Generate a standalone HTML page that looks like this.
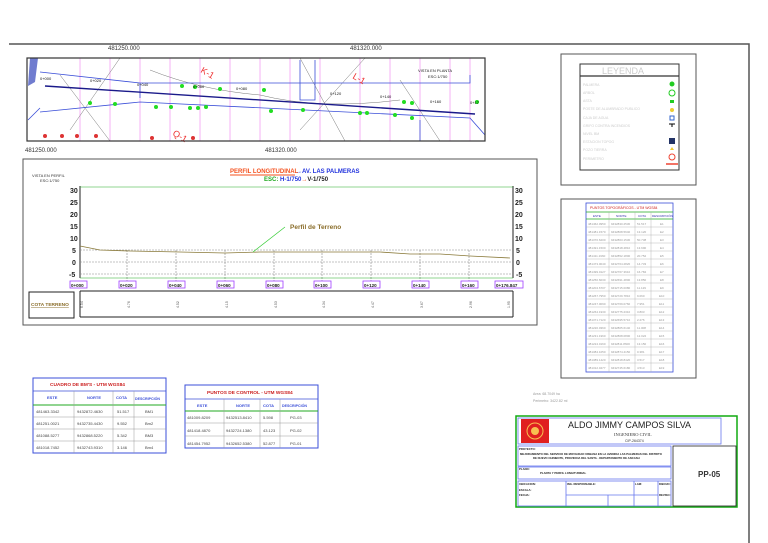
<!DOCTYPE html><html><head><style>body{margin:0;background:#fff}svg{display:block}text{font-family:"Liberation Sans",sans-serif}</style></head><body>
<svg width="768" height="543" viewBox="0 0 768 543" xmlns="http://www.w3.org/2000/svg">
<rect width="768" height="543" fill="#fff"/>
<path d="M9 44H749V543" fill="none" stroke="#555" stroke-width="1.5"/>
<text x="108" y="50" font-size="6" fill="#333">481250.000</text>
<text x="350" y="50" font-size="6" fill="#333">481320.000</text>
<g>
<rect x="27" y="58" width="458" height="83" fill="#fff"/>
<g stroke="#ee66ee" stroke-width="0.5">
<path d="M80 58V141M110 58V141M140 58V141M170 58V141M200 58V141M230 58V141M260 58V141M290 58V141M320 58V141M360 58V141M390 58V141M420 58V141M450 58V141M470 58V141"/></g>
<g stroke="#777" stroke-width="0.5" fill="none">
<path d="M60 75L110 141M120 58L70 130M300 58L345 141M365 58L300 130M400 80L440 141M150 70Q200 90 260 95Q320 110 400 100"/></g>
<g stroke="#3b4fd8" stroke-width="0.8" fill="none">
<path d="M40 72L140 83H470V75M40 112L140 102L470 118L485 135M140 83L140 98M300 60V100H315V60M420 120V141M28 120L40 108"/></g>
<path d="M45 86L475 114" stroke="#1a1a8a" stroke-width="1.4"/>
<path d="M30 58L38 58L35 82L28 86Z" fill="#3344bb" opacity="0.7"/>
<g fill="#22dd22">
<circle cx="182" cy="86" r="2"/><circle cx="195" cy="87" r="2"/><circle cx="220" cy="89" r="2"/><circle cx="264" cy="90" r="2"/><circle cx="90" cy="103" r="2"/><circle cx="115" cy="104" r="2"/><circle cx="156" cy="107" r="2"/><circle cx="171" cy="107" r="2"/><circle cx="190" cy="108" r="2"/><circle cx="198" cy="108" r="2"/><circle cx="206" cy="107" r="2"/><circle cx="271" cy="111" r="2"/><circle cx="303" cy="110" r="2"/><circle cx="360" cy="113" r="2"/><circle cx="367" cy="113" r="2"/><circle cx="395" cy="115" r="2"/><circle cx="404" cy="102" r="2"/><circle cx="412" cy="103" r="2"/><circle cx="477" cy="102" r="2"/><circle cx="412" cy="118" r="2"/>
</g>
<g fill="#d33"><circle cx="45" cy="136" r="2"/><circle cx="62" cy="136" r="2"/><circle cx="77" cy="136" r="2"/><circle cx="96" cy="136" r="2"/><circle cx="152" cy="138" r="2"/><circle cx="193" cy="138" r="2"/></g>
<text x="200" y="72" font-size="9" fill="#e33" transform="rotate(30 200 72)">K-1</text>
<text x="352" y="78" font-size="9" fill="#e33" transform="rotate(30 352 78)">L-1</text>
<text x="172" y="135" font-size="9" fill="#e33" transform="rotate(30 172 135)">Q-1</text>
<g font-size="4" fill="#111"><text x="40" y="80">0+000</text><text x="90" y="82">0+020</text><text x="137" y="86">0+040</text><text x="193" y="88">0+060</text><text x="236" y="90">0+080</text><text x="330" y="95">0+120</text><text x="380" y="98">0+140</text><text x="430" y="103">0+160</text><text x="470" y="104">0+17</text></g>
<text x="418" y="72" font-size="4" fill="#222">VISTA EN PLANTA</text><text x="428" y="78" font-size="4" fill="#222">ESC:1/750</text>
<rect x="27" y="58" width="458" height="83" fill="none" stroke="#333" stroke-width="1.2"/>
</g>
<text x="25" y="152" font-size="6" fill="#333">481250.000</text>
<text x="265" y="152" font-size="6" fill="#333">481320.000</text>
<rect x="23" y="159" width="514" height="166" fill="#fff" stroke="#555" stroke-width="1"/>
<text x="230" y="173" font-size="6" font-weight="bold" fill="#f4511e">PERFIL LONGITUDINAL</text>
<line x1="230" y1="175" x2="295" y2="175" stroke="#f4511e" stroke-width="1"/>
<text x="296" y="173" font-size="6" font-weight="bold" fill="#2233dd">→AV. LAS PALMERAS</text>
<text x="264" y="181" font-size="6" font-weight="bold" fill="#2a2">ESC: <tspan fill="#2233dd">H-1/750</tspan><tspan fill="#f4511e">→</tspan><tspan fill="#222">V-1/750</tspan></text>
<text x="32" y="177" font-size="4" fill="#333">VISTA EN PERFIL</text><text x="40" y="182" font-size="4" fill="#333">ESC:1/750</text>
<g stroke="#222" stroke-width="1"><line x1="80" y1="186" x2="80" y2="278"/><line x1="513" y1="186" x2="513" y2="278"/></g>
<g stroke="#888" stroke-width="0.6" stroke-dasharray="2,1"><line x1="80" y1="250" x2="513" y2="250"/><line x1="80" y1="262" x2="513" y2="262"/><line x1="80" y1="274" x2="513" y2="274"/>
<path d="M127 250V284M176 250V284M225 250V284M274 250V284M322 250V284M371 250V284M420 250V284M469 250V284"/></g>
<g stroke="#2a2" stroke-width="0.6"><path d="M80 187H513M80 278H513"/></g>
<g font-size="7" font-weight="bold" fill="#222">
<text x="70" y="193">30</text><text x="70" y="205">25</text><text x="70" y="217">20</text><text x="70" y="229">15</text><text x="70" y="241">10</text><text x="72" y="253">5</text><text x="72" y="265">0</text><text x="69" y="277">-5</text>
<text x="515" y="193">30</text><text x="515" y="205">25</text><text x="515" y="217">20</text><text x="515" y="229">15</text><text x="515" y="241">10</text><text x="516" y="253">5</text><text x="516" y="265">0</text><text x="516" y="277">-5</text></g>
<path d="M80 246L100 250L130 251L180 252L225 253L260 252L300 252L340 252L380 252L410 254L440 254L470 256L510 258" fill="none" stroke="#8a7a3a" stroke-width="0.8"/>
<line x1="253" y1="252" x2="285" y2="227" stroke="#3c3" stroke-width="0.7"/>
<text x="290" y="229" font-size="6.5" font-weight="bold" fill="#8a6d2a">Perfil de Terreno</text>
<g stroke="#a040ff" stroke-width="0.8" fill="#fff">
<rect x="70" y="281" width="17" height="7"/><rect x="119" y="281" width="17" height="7"/><rect x="168" y="281" width="17" height="7"/><rect x="217" y="281" width="17" height="7"/><rect x="266" y="281" width="17" height="7"/><rect x="314" y="281" width="17" height="7"/><rect x="363" y="281" width="17" height="7"/><rect x="412" y="281" width="17" height="7"/><rect x="461" y="281" width="17" height="7"/><rect x="495" y="281" width="28" height="7"/></g>
<g font-size="4.5" font-weight="bold" fill="#222">
<text x="71" y="287">0+000</text><text x="120" y="287">0+020</text><text x="169" y="287">0+040</text><text x="218" y="287">0+060</text><text x="267" y="287">0+080</text><text x="315" y="287">0+100</text><text x="364" y="287">0+120</text><text x="413" y="287">0+140</text><text x="462" y="287">0+160</text><text x="496" y="287">0+176.847</text></g>
<rect x="29" y="292" width="45" height="26" fill="#fff" stroke="#222" stroke-width="1"/>
<text x="31" y="306" font-size="4.8" font-weight="bold" fill="#8a6d2a" text-decoration="underline">COTA TERRENO</text>
<path d="M80 291H513M80 317H513M80 291V317M513 291V317" stroke="#222" stroke-width="1" fill="none"/>
<g font-size="3.5" fill="#555">
<text transform="translate(83 308) rotate(-90)">6.54</text><text transform="translate(130 308) rotate(-90)">4.76</text><text transform="translate(179 308) rotate(-90)">4.52</text><text transform="translate(228 308) rotate(-90)">4.15</text><text transform="translate(277 308) rotate(-90)">4.53</text><text transform="translate(325 308) rotate(-90)">4.34</text><text transform="translate(374 308) rotate(-90)">4.47</text><text transform="translate(423 308) rotate(-90)">3.67</text><text transform="translate(472 308) rotate(-90)">2.96</text><text transform="translate(510 308) rotate(-90)">1.95</text></g>
<rect x="561" y="54" width="135" height="131" fill="#fff" stroke="#555" stroke-width="1"/>
<rect x="580" y="64" width="99" height="106" fill="#fff" stroke="#333" stroke-width="1"/>
<line x1="580" y1="76" x2="679" y2="76" stroke="#333" stroke-width="1.2"/>
<text x="602" y="74" font-size="9" fill="#ccc">LEYENDA</text>
<g font-size="3.5" fill="#ccc"><text x="583" y="86">PALMERA</text><text x="583" y="94">ARBOL</text><text x="583" y="102">ASTA</text><text x="583" y="110">POSTE DE ALUMBRADO PUBLICO</text><text x="583" y="119">CAJA DE AGUA</text><text x="583" y="127">GRIFO CONTRA INCENDIOS</text><text x="583" y="135">NIVEL BM</text><text x="583" y="143">ESTACION TOPOG</text><text x="583" y="151">POZO TIERRA</text><text x="583" y="160">PERIMETRO</text></g>
<g><circle cx="672" cy="84" r="2.5" fill="#2c2"/><circle cx="672" cy="93" r="3" fill="none" stroke="#2c2"/><rect x="670" y="100" width="4" height="3" fill="#2c2"/><circle cx="672" cy="110" r="2" fill="#ec3"/><rect x="670" y="116" width="4" height="4" fill="none" stroke="#36c"/><path d="M669 124H675M672 124V127" stroke="#000"/><rect x="669" y="138" width="6" height="6" fill="#236"/><path d="M670 150L672 147L674 150Z" fill="#ec3"/><circle cx="672" cy="157" r="3" fill="none" stroke="#e43"/><path d="M666 164H678" stroke="#e43" stroke-width="1.5"/></g>
<rect x="561" y="199" width="135" height="179" fill="#fff" stroke="#555" stroke-width="1"/>
<rect x="586" y="203" width="87" height="169" fill="#fff" stroke="#3b4fd8" stroke-width="0.8"/>
<text x="590" y="209" font-size="3.5" fill="#c22">PUNTOS TOPOGRÁFICOS - UTM WGS84</text>
<line x1="586" y1="212" x2="673" y2="212" stroke="#2a2" stroke-width="0.8"/>
<line x1="586" y1="219" x2="673" y2="219" stroke="#2a2" stroke-width="0.8"/>
<g stroke="#aaa" stroke-width="0.4"><path d="M609 212V372M635 212V372M651 212V372"/>
<path d="M586 227H673M586 235H673M586 243H673M586 251H673M586 259H673M586 267H673M586 275H673M586 283H673M586 291H673M586 299H673M586 307H673M586 315H673M586 323H673M586 331H673M586 339H673M586 347H673M586 355H673M586 363H673"/></g>
<g font-size="3" fill="#33a"><text x="593" y="217">ESTE</text><text x="616" y="217">NORTE</text><text x="638" y="217">COTA</text><text x="652" y="217">DESCRIPCIÓN</text></g>
<g font-size="3" fill="#999">
<text x="588" y="225">481462.0950</text><text x="611" y="225">9432830.2530</text><text x="637" y="225">51.517</text><text x="660" y="225">E1</text>
<text x="588" y="233">481481.1570</text><text x="611" y="233">9432808.5640</text><text x="637" y="233">13.120</text><text x="660" y="233">E2</text>
<text x="588" y="241">481370.6200</text><text x="611" y="241">9432863.1530</text><text x="637" y="241">50.738</text><text x="660" y="241">E3</text>
<text x="588" y="249">481491.1500</text><text x="611" y="249">9432818.4810</text><text x="637" y="249">13.690</text><text x="660" y="249">E4</text>
<text x="588" y="257">481411.1960</text><text x="611" y="257">9432852.1800</text><text x="637" y="257">20.752</text><text x="660" y="257">E5</text>
<text x="588" y="265">481473.0040</text><text x="611" y="265">9432764.2820</text><text x="637" y="265">14.733</text><text x="660" y="265">E6</text>
<text x="588" y="273">481499.0127</text><text x="611" y="273">9432767.3610</text><text x="637" y="273">16.784</text><text x="660" y="273">E7</text>
<text x="588" y="281">481250.6030</text><text x="611" y="281">9432691.4800</text><text x="637" y="281">13.850</text><text x="660" y="281">E8</text>
<text x="588" y="289">481204.6707</text><text x="611" y="289">9432715.0080</text><text x="637" y="289">11.129</text><text x="660" y="289">E9</text>
<text x="588" y="297">481267.7950</text><text x="611" y="297">9432729.7810</text><text x="637" y="297">9.060</text><text x="659" y="297">E10</text>
<text x="588" y="305">481247.0090</text><text x="611" y="305">9432769.0760</text><text x="637" y="305">7.951</text><text x="659" y="305">E11</text>
<text x="588" y="313">481264.1930</text><text x="611" y="313">9432775.2310</text><text x="637" y="313">3.803</text><text x="659" y="313">E12</text>
<text x="588" y="321">481371.7120</text><text x="611" y="321">9432695.5710</text><text x="637" y="321">2.276</text><text x="659" y="321">E13</text>
<text x="588" y="329">481220.0360</text><text x="611" y="329">9432805.6140</text><text x="637" y="329">11.008</text><text x="659" y="329">E14</text>
<text x="588" y="337">481231.1960</text><text x="611" y="337">9432808.0800</text><text x="637" y="337">12.022</text><text x="659" y="337">E15</text>
<text x="588" y="345">481224.0160</text><text x="611" y="345">9432811.8600</text><text x="637" y="345">13.150</text><text x="659" y="345">E16</text>
<text x="588" y="353">481384.1050</text><text x="611" y="353">9432874.4150</text><text x="637" y="353">0.381</text><text x="659" y="353">E17</text>
<text x="588" y="361">481389.1420</text><text x="611" y="361">9432818.8420</text><text x="637" y="361">3.517</text><text x="659" y="361">E18</text>
<text x="588" y="369">481312.0477</text><text x="611" y="369">9432745.6180</text><text x="637" y="369">4.513</text><text x="659" y="369">E19</text>
</g>
<g>
<rect x="33" y="378" width="133" height="75" fill="#fff" stroke="#3b4fd8" stroke-width="1"/>
<text x="50" y="386" font-size="4.8" font-weight="bold" fill="#c22">CUADRO DE BM'S - UTM WGS84</text>
<line x1="33" y1="391" x2="166" y2="391" stroke="#3b4fd8" stroke-width="0.8"/>
<line x1="33" y1="405" x2="166" y2="405" stroke="#2a2" stroke-width="1"/>
<g stroke="#999" stroke-width="0.5"><path d="M74 391V453M113 391V453M134 391V453M33 417H166M33 429H166M33 441H166"/></g>
<g font-size="4" font-weight="bold" fill="#3b4fd8"><text x="47" y="399">ESTE</text><text x="87" y="399">NORTE</text><text x="116" y="399">COTA</text><text x="135" y="400" font-size="3.6">DESCRIPCIÓN</text></g>
<g font-size="4" fill="#444"><text x="36" y="413">481463.3342</text><text x="77" y="413">9432872.4630</text><text x="117" y="413">51.517</text><text x="145" y="413">BM1</text>
<text x="36" y="425">481251.0021</text><text x="77" y="425">9432735.4430</text><text x="117" y="425">9.552</text><text x="145" y="425">Bm2</text>
<text x="36" y="437">481088.5277</text><text x="77" y="437">9432868.5220</text><text x="117" y="437">5.342</text><text x="145" y="437">BM3</text>
<text x="36" y="449">481018.7452</text><text x="77" y="449">9432743.9310</text><text x="117" y="449">3.146</text><text x="145" y="449">Bm4</text></g>
</g>
<g>
<rect x="185" y="385" width="133" height="63" fill="#fff" stroke="#3b4fd8" stroke-width="1"/>
<text x="207" y="394" font-size="4.8" font-weight="bold" fill="#c22">PUNTOS DE CONTROL - UTM WGS84</text>
<line x1="185" y1="399" x2="318" y2="399" stroke="#3b4fd8" stroke-width="0.8"/>
<line x1="185" y1="411" x2="318" y2="411" stroke="#2a2" stroke-width="1"/>
<g stroke="#999" stroke-width="0.5"><path d="M224 399V448M260 399V448M280 399V448M185 423H318M185 436H318"/></g>
<g font-size="4" font-weight="bold" fill="#3b4fd8"><text x="197" y="407">ESTE</text><text x="236" y="407">NORTE</text><text x="263" y="407">COTA</text><text x="282" y="407" font-size="3.6">DESCRIPCIÓN</text></g>
<g font-size="4" fill="#444"><text x="187" y="419">481009.8209</text><text x="226" y="419">9432513.8410</text><text x="263" y="419">5.598</text><text x="290" y="419">PG-03</text>
<text x="187" y="432">481418.4870</text><text x="226" y="432">9432724.1380</text><text x="263" y="432">43.123</text><text x="290" y="432">PG-02</text>
<text x="187" y="445">481454.7952</text><text x="226" y="445">9432652.5380</text><text x="263" y="445">52.877</text><text x="290" y="445">PG-01</text></g>
</g>
<text x="533" y="395" font-size="3.5" fill="#999">Area: 68.7049 ha</text>
<text x="533" y="402" font-size="3.5" fill="#999">Perimetro: 3422.82 ml</text>
<rect x="516" y="416" width="221" height="91" fill="#fff" stroke="#1a1" stroke-width="1.5"/>
<rect x="518" y="418" width="203" height="26" fill="none" stroke="#6677ee" stroke-width="0.8"/>
<rect x="521" y="419" width="28" height="24" fill="#e02020"/>
<circle cx="535" cy="431" r="8" fill="none" stroke="#f8c050" stroke-width="1"/><circle cx="535" cy="431" r="4" fill="#f8c050"/>
<text x="568" y="428" font-size="9" fill="#222">ALDO JIMMY CAMPOS SILVA</text>
<text x="614" y="436" font-size="4.5" fill="#333" style="font-family:'Liberation Serif',serif">INGENIERO CIVIL</text>
<text x="625" y="442" font-size="3.5" fill="#333">CIP-264374</text>
<rect x="518" y="446" width="153" height="20" fill="none" stroke="#6677ee" stroke-width="0.8"/>
<rect x="518" y="467" width="153" height="12" fill="none" stroke="#6677ee" stroke-width="0.8"/>
<rect x="518" y="481" width="153" height="25" fill="none" stroke="#6677ee" stroke-width="0.8"/>
<path d="M566 481V506M634 481V506M658 481V506M566 495H658M608 495V506" stroke="#6677ee" stroke-width="0.8"/>
<rect x="673" y="446" width="63" height="60" fill="none" stroke="#222" stroke-width="0.8"/>
<text x="698" y="477" font-size="8" font-weight="bold" fill="#333">PP-05</text>
<g font-size="2.8" fill="#222" font-weight="bold"><text x="519" y="450">PROYECTO:</text><text x="520" y="455">MEJORAMIENTO DEL SERVICIO DE MOVILIDAD URBANA EN LA AVENIDA LAS PALMERAS DEL DISTRITO</text><text x="533" y="459">DE NUEVO CHIMBOTE, PROVINCIA DEL SANTA - DEPARTAMENTO DE ANCASH</text>
<text x="519" y="470">PLANO:</text><text x="540" y="474">PLANTA Y PERFIL LONGITUDINAL</text>
<text x="519" y="485">UBICACION:</text><text x="519" y="491">ESCALA:</text><text x="519" y="496">FECHA:</text><text x="567" y="485">ING. RESPONSABLE:</text><text x="635" y="485">LAM:</text><text x="659" y="485">DIBUJO:</text><text x="659" y="496">REVISO:</text></g>
</svg>
</body></html>
